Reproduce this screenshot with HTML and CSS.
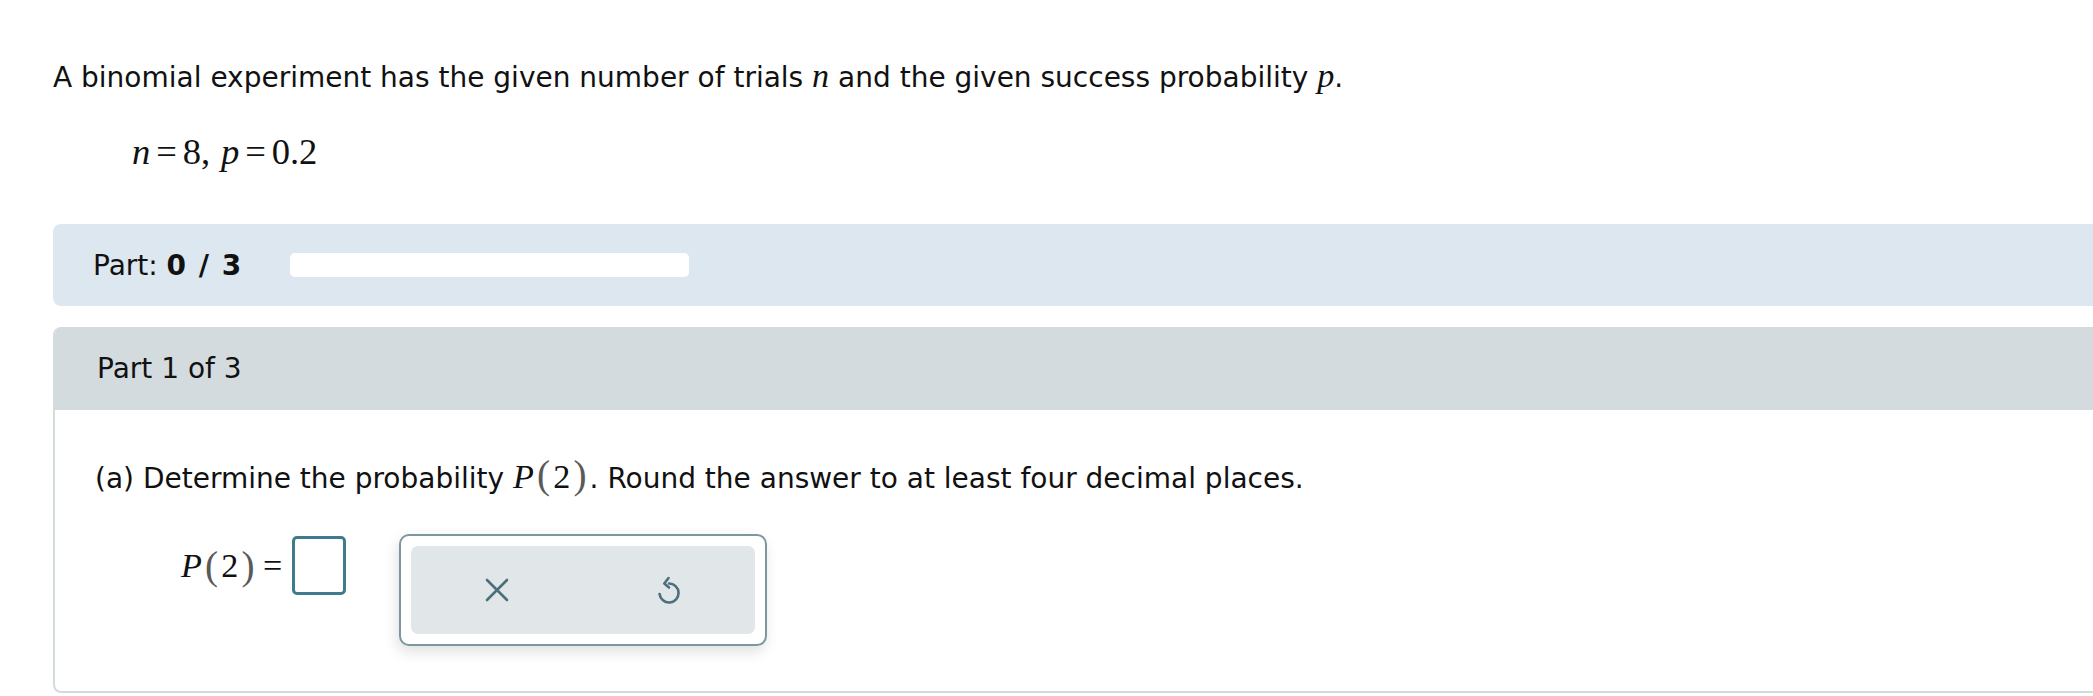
FILE: index.html
```html
<!DOCTYPE html>
<html lang="en">
<head>
<meta charset="utf-8">
<title>Binomial experiment</title>
<link rel="stylesheet" href="styles.css">
</head>
<body>
<main class="page">
  <p class="intro">A binomial experiment has the given number of trials <span class="mi">n</span> and the given success probability <span class="mi">p</span>.</p>
  <div class="given">
    <span class="mi">n</span><span class="mo">=</span><span class="mn">8</span><span class="mp">,</span><span class="mi">p</span><span class="mo">=</span><span class="mn">0.2</span>
  </div>

  <section class="progress">
    <span class="progress-label">Part: <b>0 / 3</b></span>
    <span class="progress-track"></span>
  </section>

  <section class="part">
    <header class="part-head">Part 1 of 3</header>
    <div class="part-body">
      <p class="question">(a) Determine the probability <span class="mi">P</span><span class="paren">(</span><span class="mn">2</span><span class="paren">)</span>. Round the answer to at least four decimal places.</p>
      <div class="answer-row">
        <div class="eq">
          <span class="mi">P</span><span class="paren">(</span><span class="mn">2</span><span class="paren">)</span><span class="mo">=</span>
          <span class="input-box"></span>
        </div>
        <div class="tools">
          <div class="tools-inner">
            <button class="tool" type="button" aria-label="Clear">
              <svg width="24" height="24" viewBox="0 0 24 24"><path d="M2 2 L22 22 M22 2 L2 22" fill="none" stroke="#4d6f7b" stroke-width="2.6" stroke-linecap="round"/></svg>
            </button>
            <button class="tool" type="button" aria-label="Undo">
              <svg width="28" height="28" viewBox="0 0 28 28"><path d="M14 7.5 A9.5 9.5 0 1 1 4.6 18" fill="none" stroke="#4d6f7b" stroke-width="2.6" stroke-linecap="round"/><path d="M13.5 2 L9.3 7.5 L14 11.5" fill="none" stroke="#4d6f7b" stroke-width="2.6" stroke-linecap="round" stroke-linejoin="round"/></svg>
            </button>
          </div>
        </div>
      </div>
    </div>
  </section>
</main>
</body>
</html>
```

FILE: styles.css
```css
html, body {
  margin: 0;
  padding: 0;
  background: #ffffff;
  overflow: hidden;
}

body {
  font-family: "DejaVu Sans", Verdana, sans-serif;
  color: #111111;
}

.page {
  padding: 58px 0 0 53px;
}

.intro {
  margin: 0;
  font-size: 28px;
  line-height: 36px;
}

.mi {
  font-family: "Liberation Serif", "Times New Roman", serif;
  font-style: italic;
  font-size: 1.22em;
}

.mn {
  font-family: "Liberation Serif", "Times New Roman", serif;
  font-size: 1.22em;
}

.mo {
  font-family: "Liberation Serif", "Times New Roman", serif;
  font-size: 1.22em;
  margin: 0 0.16em;
}

.mp {
  font-family: "Liberation Serif", "Times New Roman", serif;
  font-size: 1.22em;
  margin-right: 0.3em;
}

.paren {
  font-family: "Liberation Serif", "Times New Roman", serif;
  font-size: 1.4em;
  color: #5a5a5a;
  margin: 0 0.08em;
}

.given {
  margin: 36px 0 0 79px;
  font-size: 30px;
  line-height: 40px;
}

.progress {
  margin: 50px -20px 0 0;
  height: 82px;
  background: #dde7f0;
  border-radius: 8px 0 0 8px;
  display: flex;
  align-items: center;
  padding-left: 40px;
  font-size: 28px;
}

.progress-label b {
  font-weight: bold;
  letter-spacing: 1px;
  word-spacing: 1px;
}

.progress-track {
  margin-left: 48px;
  width: 399px;
  height: 24px;
  background: #ffffff;
  border-radius: 5px;
}

.part {
  margin: 21px -20px 0 0;
  border: 2px solid #d4dbdf;
  border-top: none;
  border-right: none;
  border-radius: 8px 0 0 8px;
  overflow: hidden;
}

.part-head {
  height: 83px;
  background: #d3dbdf;
  display: flex;
  align-items: center;
  padding-left: 42px;
  font-size: 28px;
}

.part-body {
  padding: 47px 0 45px 40px;
}

.question {
  margin: 0;
  font-size: 28px;
  line-height: 36px;
}

.answer-row {
  margin-top: 37px;
  display: flex;
  align-items: flex-start;
  gap: 53px;
}

.eq {
  display: flex;
  align-items: center;
  margin-left: 86px;
  margin-top: 2px;
  font-size: 28px;
}

.eq .paren {
  margin: 0 0.08em;
}

.eq .mo {
  margin: 0 0.28em 0 0.16em;
}

.input-box {
  width: 48px;
  height: 53px;
  border: 3px solid #3f7b8d;
  border-radius: 5px;
}

.tools {
  width: 344px;
  padding: 10px;
  border: 2px solid #7d97a1;
  border-radius: 10px;
  background: #ffffff;
  box-shadow: -2px 6px 14px rgba(0, 0, 0, 0.12);
}

.tools-inner {
  display: flex;
  height: 88px;
  background: #e1e6e9;
  border-radius: 7px;
}

.tool {
  flex: 1;
  display: flex;
  align-items: center;
  justify-content: center;
  border: none;
  background: transparent;
  padding: 0;
}
```
